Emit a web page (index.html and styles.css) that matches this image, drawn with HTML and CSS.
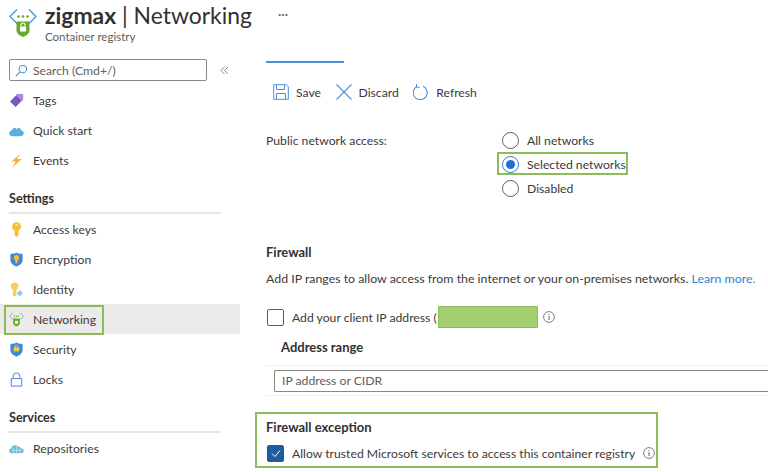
FILE: index.html
```html
<!DOCTYPE html>
<html lang="en">
<head>
<meta charset="utf-8">
<title>zigmax | Networking</title>
<link rel="stylesheet" href="styles.css">
</head>
<body>
<div class="page">
  <header class="head">
    <svg class="logo" viewBox="0 0 28 30" width="28" height="30">
      <path d="M8 1.5 1 8.5l7 7M20 1.5l7 7-7 7" fill="none" stroke="#4a9fd8" stroke-width="1.5"/>
      <circle cx="9.5" cy="8.5" r="1.3" fill="#5ea82f"/><circle cx="14" cy="8.5" r="1.3" fill="#5ea82f"/><circle cx="18.5" cy="8.5" r="1.3" fill="#5ea82f"/>
      <path d="M7.5 13.5h13v9c0 3.500-4 5.500-6.500 6.500-2.500-1-6.500-3-6.500-6.500z" fill="#6aa82f"/>
      <rect x="11" y="18.500" width="6" height="5" rx=".5" fill="#fff"/>
      <path d="M12 18.500v-1.500a2 2 0 0 1 4 0v1.500" fill="none" stroke="#fff" stroke-width="1.100"/>
    </svg>
    <div class="titles">
      <h1><b>zigmax</b> | Networking</h1>
      <p>Container registry</p>
    </div>
    <span class="more">···</span>
  </header>
  <div class="cols">
    <nav class="side">
      <div class="searchrow">
        <div class="search">
          <svg viewBox="0 0 14 14" width="13" height="13"><circle cx="8.500" cy="5.500" r="4" fill="none" stroke="#4a8fe0" stroke-width="1.100"/><path d="M5.500 8.500 1 13" stroke="#4a8fe0" stroke-width="1.300"/></svg>
          <span>Search (Cmd+/)</span>
        </div>
        <svg class="collapse" viewBox="0 0 9 9" width="9" height="9"><path d="M4.500 1 1 4.500 4.500 8M8 1 4.500 4.500 8 8" fill="none" stroke="#8a8886"/></svg>
      </div>
      <ul class="items first">
        <li><svg class="ic" viewBox="0 0 16 16"><path d="M9 1h6v6l-8 8-6-6z" fill="#7a55c7"/><path d="M9 1h6v6l-1.500 1.500-6-6z" fill="#a48ae0"/></svg>Tags</li>
        <li><svg class="ic" viewBox="0 0 16 16"><path d="M3.500 14a3 3 0 0 1-.5-6 4 4 0 0 1 4-3l1 2 1.500-2a3.500 3.500 0 0 1 3.500 3 3 3 0 0 1-.5 6z" fill="#5ab0dc"/></svg>Quick start</li>
        <li><svg class="ic" viewBox="0 0 16 16"><path d="M12.500 .5 2.500 9h4.500L3.500 15.500 13.500 6.500H8.500z" fill="#f4b72c"/></svg>Events</li>
      </ul>
      <h2 class="group settings">Settings</h2>
      <ul class="items">
        <li><svg class="ic" viewBox="0 0 16 16"><circle cx="8" cy="5" r="4.800" fill="#f6bf35"/><path d="M6 8h4v6l-2 2-2-2z" fill="#f6bf35"/><circle cx="8" cy="3" r="1.100" fill="#fff3c8"/></svg>Access keys</li>
        <li><svg class="ic" viewBox="0 0 16 16"><path d="M8 .5c2 1.200 4 1.500 6.500 1.500v6.500c0 3.500-3.500 6-6.500 7-3-1-6.500-3.500-6.500-7V2C4 2 6 1.700 8 .5z" fill="#3f86dc"/><circle cx="8" cy="6" r="2.800" fill="#f6bf35"/><path d="M6.800 7h2.400v5H6.800z" fill="#f6bf35"/></svg>Encryption</li>
        <li><svg class="ic" viewBox="0 0 16 16"><circle cx="6" cy="4.500" r="4" fill="#f6cf55"/><path d="M4.200 7h3.600v8H4.200z" fill="#f6cf55"/><path d="m11.500 8.500 3.500 3.500-3.500 3.500L8 12z" fill="#8fcbe8"/></svg>Identity</li>
        <li class="current"><svg class="ic" viewBox="0 0 16 16"><path d="M4 1 .7 4.500 4 8M12 1l3.300 3.500L12 8" fill="none" stroke="#6ab0de"/><circle cx="6" cy="4.500" r=".7" fill="#5ea82f"/><circle cx="8" cy="4.500" r=".7" fill="#5ea82f"/><circle cx="10" cy="4.500" r=".7" fill="#5ea82f"/><path d="M4.500 7h7v5c0 1.800-2.200 3-3.500 3.500-1.300-.5-3.500-1.700-3.500-3.500z" fill="#6aa82f"/><rect x="6.500" y="9.500" width="3" height="3" fill="#fff"/></svg>Networking</li>
        <li><svg class="ic" viewBox="0 0 16 16"><path d="M8 .5c2 1.200 4 1.500 6.500 1.500v6.500c0 3.500-3.500 6-6.500 7-3-1-6.500-3.500-6.500-7V2C4 2 6 1.700 8 .5z" fill="#3f86dc"/><rect x="5" y="5.500" width="6" height="4.500" fill="#f6c945"/><path d="M6.300 5.500V5a1.700 1.700 0 0 1 3.400 0v.5" fill="none" stroke="#f6c945"/></svg>Security</li>
        <li><svg class="ic" viewBox="0 0 16 16"><rect x="2.500" y="7" width="11" height="8" fill="#fff" stroke="#5f97e6" stroke-width="1.200"/><path d="M4.500 7V4.500a3.500 3.500 0 0 1 7 0V7" fill="none" stroke="#5f97e6" stroke-width="1.200"/></svg>Locks</li>
      </ul>
      <h2 class="group services">Services</h2>
      <ul class="items">
        <li><svg class="ic" viewBox="0 0 16 16"><path d="M2.500 13a2.500 2.500 0 0 1 0-5 4 4 0 0 1 4-3.500c1 0 2 .2 3 1A4 4 0 0 1 13 8a2.500 2.500 0 0 1 .5 5z" fill="#6cbbe0"/><path d="M5 7v6M8 5.500V13M11 7v6M2 10h12" stroke="#dff1fa" stroke-width=".6"/></svg>Repositories</li>
      </ul>
    </nav>
    <main class="main">
      <div class="tabline"></div>
      <div class="toolbar">
        <span class="tool"><svg viewBox="0 0 16 16" width="16" height="16"><path d="M.7.700h12.600l2 2v12.600H.7z" fill="#fff" stroke="#4a8fe0"/><path d="M3.500 1v4.500h8V1M3.500 15V9.500h9V15" fill="none" stroke="#4a8fe0"/></svg>Save</span>
        <span class="tool"><svg viewBox="0 0 16 16" width="16" height="16"><path d="m.5.500 15 15m0-15-15 15" stroke="#4a8fe0" stroke-width="1.100"/></svg>Discard</span>
        <span class="tool"><svg viewBox="0 0 16 16" width="16" height="16"><path d="M10 2.300A7 7 0 1 1 4 2.500" fill="none" stroke="#4a8fe0" stroke-width="1.100"/><path d="M3.500 0v3.200h3.200" fill="none" stroke="#4a8fe0"/></svg>Refresh</span>
      </div>
      <div class="access">
        <span class="access-label">Public network access:</span>
        <div class="radios">
          <div class="radio"><i class="dot"></i>All networks</div>
          <div class="radio marked"><i class="dot on"></i>Selected networks</div>
          <div class="radio"><i class="dot"></i>Disabled</div>
        </div>
      </div>
      <h3 class="fw">Firewall</h3>
      <p class="desc">Add IP ranges to allow access from the internet or your on-premises networks. <a>Learn more.</a></p>
      <div class="ip">
        <i class="box"></i><span>Add your client IP address (</span>
        <span class="mask"></span>
        <svg class="info first-info" viewBox="0 0 12 12" width="12" height="12"><circle cx="6" cy="6" r="5.400" fill="none" stroke="#605e5c" stroke-width=".8"/><path d="M6 5v4M6 3v1" stroke="#605e5c"/></svg>
      </div>
      <div class="range-title">Address range</div>
      <div class="range"><div class="field">IP address or CIDR</div></div>
      <section class="exception">
        <h3>Firewall exception</h3>
        <div class="allow">
          <i class="box checked"><svg viewBox="0 0 12 12" width="12" height="12"><path d="m2 6.500 3 3 5-6" fill="none" stroke="#fff"/></svg></i>
          <span>Allow trusted Microsoft services to access this container registry</span>
          <svg class="info" viewBox="0 0 12 12" width="12" height="12"><circle cx="6" cy="6" r="5.400" fill="none" stroke="#605e5c" stroke-width=".8"/><path d="M6 5v4M6 3v1" stroke="#605e5c"/></svg>
        </div>
      </section>
    </main>
  </div>
</div>
</body>
</html>
```
FILE: styles.css
```css
*, *::before, *::after { box-sizing: border-box; }
html, body { margin: 0; padding: 0; background: #fff; }
body { font-family: "Lato", "Open Sans", "Liberation Sans", sans-serif; font-size: 12.2px; color: #3b3a39; }
.page { width: 768px; height: 472px; overflow: hidden; }
h1, h2, h3, p, ul { margin: 0; padding: 0; }
ul { list-style: none; }

.head { display: flex; height: 59px; padding: 6px 0 0 9px; }
.logo { margin-top: 2px; flex: none; }
.titles { margin-left: 8px; }
h1 { font-size: 22.9px; font-weight: 400; line-height: 20px; margin-top: -1px; color: #323130; white-space: nowrap; }
h1 b { font-weight: 700; }
.titles p { font-size: 11.5px; line-height: 14px; margin-top: 5px; color: #605e5c; }
.more { margin: -1px 0 0 26px; font-size: 13px; color: #605e5c; line-height: 18px; }

.cols { display: flex; }
.side { width: 240px; flex: none; }
.searchrow { display: flex; align-items: center; padding-left: 9px; }
.search { width: 198px; height: 22px; border: 1px solid #8a8886; border-radius: 2px; display: flex; align-items: center; gap: 5px; padding-left: 5px; color: #605e5c; }
.collapse { margin-left: 13px; }
.items li { height: 30px; display: flex; align-items: center; padding-left: 9px; gap: 9px; color: #3b3a39; white-space: nowrap; }
.items.first { margin-top: 4px; }
.ic { width: 15px; height: 15px; flex: none; }
.items .current { background: #edebe9; position: relative; }
.current::after { content: ""; position: absolute; left: 4px; top: 1px; width: 100px; height: 30px; border: 2px solid #8cbb5a; }
.group { margin-left: 9px; width: 212px; font-size: 12.6px; font-weight: 700; color: #323130; line-height: 17px; padding-bottom: 5px; border-bottom: 2px solid #e6e6e6; }
.settings { margin-top: 15px; }
.services { margin-top: 15px; }

.main { flex: 1; padding-left: 26px; min-width: 0; }
.tabline { width: 78px; height: 2px; background: #4a8fe0; margin-top: 2px; }
.toolbar { display: flex; margin: 20px 0 0 7px; height: 18px; align-items: center; }
.tool { display: flex; align-items: center; gap: 7px; margin-right: 14.5px; color: #3b3a39; }
.access { display: flex; margin-top: 27px; }
.access-label { width: 236px; padding-top: 4px; line-height: 17px; }
.radios { display: flex; flex-direction: column; }
.radio { display: flex; align-items: center; gap: 8px; height: 24px; padding-left: 0; white-space: nowrap; }
.radio.marked { position: relative; }
.radio.marked::after { content: ""; position: absolute; left: -5px; top: 0; width: 131px; height: 23px; border: 2px solid #8cbb5a; }
.dot { width: 17px; height: 17px; border-radius: 50%; border: 1px solid #605e5c; flex: none; }
.dot.on { border-color: #2f7bd8; position: relative; }
.dot.on::after { content: ""; position: absolute; left: 3px; top: 3px; width: 9px; height: 9px; border-radius: 50%; background: #1f6fd0; }
.fw { font-size: 13px; font-weight: 700; color: #323130; margin-top: 44px; line-height: 17px; }
.desc { margin-top: 9px; line-height: 17px; white-space: nowrap; font-size: 12.35px; }
.desc a { color: #2f7fd6; }
.ip { display: flex; align-items: center; margin-top: 18px; height: 24px; }
.box { width: 17px; height: 17px; border: 1px solid #605e5c; border-radius: 2px; margin: 0 8px 0 1px; flex: none; display: flex; align-items: center; justify-content: center; }
.box.checked { background: #1f5b9f; border-color: #1f5b9f; }
.mask { width: 100px; height: 22px; background: #a3cf6e; border: 1px solid #8cbb5a; margin-left: 1px; }
.info { margin-left: 8px; flex: none; }
.first-info { margin-left: 5px; }
.range-title { margin: 10px 0 0 15px; font-size: 13px; font-weight: 700; color: #323130; line-height: 17px; }
.range { margin-top: 9px; border-top: 1px solid #f0f0f0; border-bottom: 1px solid #f0f0f0; height: 31px; padding: 4px 0 0 8px; }
.field { height: 22px; border: 1px solid #8a8886; border-right: 0; border-radius: 2px 0 0 2px; padding-left: 7px; line-height: 20px; color: #605e5c; }
.exception { width: 403px; height: 56px; margin: 16px 0 0 -11px; border: 2px solid #8cbb5a; padding: 5px 0 0 9px; }
.exception h3 { font-size: 13px; font-weight: 700; color: #323130; line-height: 17px; }
.allow { display: flex; align-items: center; height: 20px; margin-top: 7px; white-space: nowrap; }
```
